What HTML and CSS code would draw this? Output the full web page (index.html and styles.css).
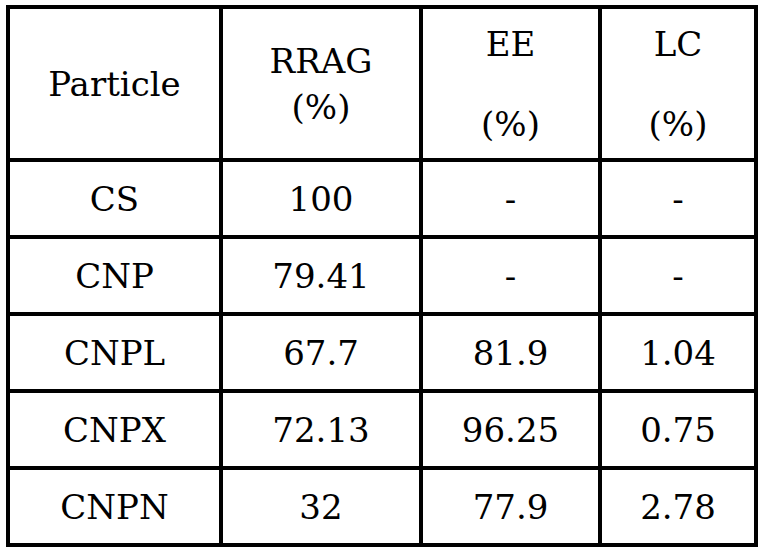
FILE: index.html
```html
<!DOCTYPE html>
<html lang="en">
<head>
  <meta charset="UTF-8">
  <title>Particle table</title>
  <link rel="stylesheet" href="styles.css">
</head>
<body>

<table class="data">
  <tr class="head">
    <th class="c1">Particle</th>
    <th class="c2"><div>RRAG</div><div>(%)</div></th>
    <th class="c3"><div>EE</div><div class="gap">(%)</div></th>
    <th class="c4"><div>LC</div><div class="gap">(%)</div></th>
  </tr>
  <tr><td>CS</td><td>100</td><td>-</td><td>-</td></tr>
  <tr><td>CNP</td><td>79.41</td><td>-</td><td>-</td></tr>
  <tr><td>CNPL</td><td>67.7</td><td>81.9</td><td>1.04</td></tr>
  <tr><td>CNPX</td><td>72.13</td><td>96.25</td><td>0.75</td></tr>
  <tr><td>CNPN</td><td>32</td><td>77.9</td><td>2.78</td></tr>
</table>

</body>
</html>
```

FILE: styles.css
```css
* { box-sizing: border-box; }
body {
  margin: 0;
  background: #fff;
  color: #000;
  font-family: "DejaVu Serif", serif;
}
.data {
  margin: 5px 0 0 6px;
  border-collapse: separate;
  border-spacing: 0;
  table-layout: fixed;
  width: 752px;
  border-top: 4px solid #000;
  border-left: 4px solid #000;
}
.data th,
.data td {
  padding: 0;
  border-right: 4px solid #000;
  border-bottom: 4px solid #000;
  text-align: center;
  vertical-align: middle;
  font-family: "DejaVu Serif", serif;
  font-size: 34px;
  font-weight: normal;
  line-height: 46px;
  height: 77px;
}
.data .head th { height: 153px; }
.c1 { width: 213px; }
.c2 { width: 200px; }
.c3 { width: 179px; }
.c4 { width: 156px; }
.gap { margin-top: 34px; }
```
